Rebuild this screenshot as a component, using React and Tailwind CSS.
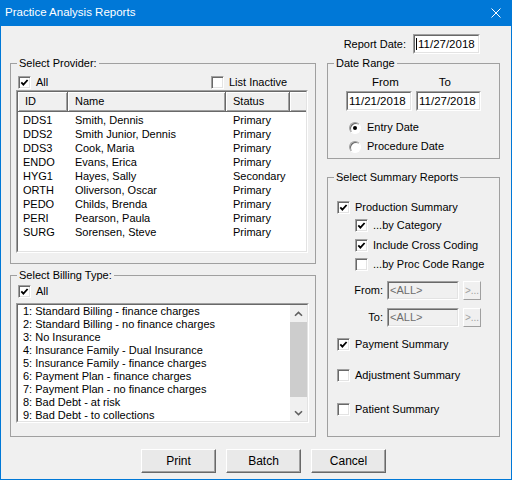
import React from 'react';

const providers = [
    { id: 'DDS1', name: 'Smith, Dennis', status: 'Primary' },
    { id: 'DDS2', name: 'Smith Junior, Dennis', status: 'Primary' },
    { id: 'DDS3', name: 'Cook, Maria', status: 'Primary' },
    { id: 'ENDO', name: 'Evans, Erica', status: 'Primary' },
    { id: 'HYG1', name: 'Hayes, Sally', status: 'Secondary' },
    { id: 'ORTH', name: 'Oliverson, Oscar', status: 'Primary' },
    { id: 'PEDO', name: 'Childs, Brenda', status: 'Primary' },
    { id: 'PERI', name: 'Pearson, Paula', status: 'Primary' },
    { id: 'SURG', name: 'Sorensen, Steve', status: 'Primary' },
];

const billingTypes = [
    '1: Standard Billing - finance charges',
    '2: Standard Billing - no finance charges',
    '3: No Insurance',
    '4: Insurance Family - Dual Insurance',
    '5: Insurance Family - finance charges',
    '6: Payment Plan - finance charges',
    '7: Payment Plan - no finance charges',
    '8: Bad Debt - at risk',
    '9: Bad Debt - to collections',
];

// classic sunken edge, used on text boxes and list boxes
function Sunken({ className = '', innerClassName = '', children }) {
    return (
        <div className={`border border-t-[#a0a0a0] border-l-[#a0a0a0] border-b-white border-r-white ${className}`}>
            <div className={`h-full border border-t-[#696969] border-l-[#696969] border-b-[#e3e3e3] border-r-[#e3e3e3] ${innerClassName}`}>
                {children}
            </div>
        </div>
    );
}

function CheckBox({ checked, label, className = '' }) {
    return (
        <div className={`flex h-[13px] items-center gap-[5px] leading-[13px] ${className}`}>
            <span className="flex h-[13px] w-[13px] shrink-0 items-center justify-center border border-t-[#a0a0a0] border-l-[#a0a0a0] border-b-white border-r-white bg-white shadow-[inset_1px_1px_0_#696969,inset_-1px_-1px_0_#e3e3e3]">
                {checked && (
                    <svg width="9" height="9" viewBox="0 0 9 9">
                        <path d="M1.3 4.3 L3.4 6.6 L7.6 2" stroke="#000" strokeWidth="1.8" fill="none" />
                    </svg>
                )}
            </span>
            <span>{label}</span>
        </div>
    );
}

function Radio({ checked, label, className = '' }) {
    return (
        <div className={`flex h-[13px] items-center gap-[6px] leading-[13px] ${className}`}>
            <span className="flex h-[12px] w-[12px] shrink-0 items-center justify-center rounded-full border border-t-[#a0a0a0] border-l-[#a0a0a0] border-b-white border-r-white bg-white shadow-[inset_1px_1px_0_#696969]">
                {checked && <span className="h-[4px] w-[4px] rounded-full bg-black" />}
            </span>
            <span>{label}</span>
        </div>
    );
}

function Group({ title, className = '', children }) {
    return (
        <fieldset className={`border border-[#a0a0a0] ${className}`}>
            <legend className="ml-[6px] px-[2px] leading-[13px]">{title}</legend>
            {children}
        </fieldset>
    );
}

function Button({ children }) {
    return (
        <div className="flex h-[24px] w-[75px] items-center justify-center border border-t-white border-l-white border-b-[#696969] border-r-[#696969] bg-[#e9e9e9] shadow-[inset_-1px_-1px_0_#a0a0a0] text-[12px]">
            {children}
        </div>
    );
}

function Chevron({ down }) {
    return (
        <svg width="9" height="6" viewBox="0 0 9 6">
            <path d={down ? 'M1 1.2 L4.5 4.6 L8 1.2' : 'M1 4.8 L4.5 1.4 L8 4.8'} stroke="#606060" strokeWidth="1.6" fill="none" />
        </svg>
    );
}

function DateBox({ value, caret, className = '' }) {
    return (
        <Sunken className={`h-[20px] bg-white ${className}`} innerClassName="flex items-center pl-[1px] text-[11.5px] leading-[14px]">
            {caret && <span className="mr-px h-[12px] w-px bg-black" />}
            <span>{value}</span>
        </Sunken>
    );
}

function CodeRange({ label, className = '' }) {
    return (
        <div className={`flex items-center ${className}`}>
            <span className="w-[55px] text-right">{label}</span>
            <Sunken className="ml-[4px] h-[19px] w-[72px] bg-[#f0f0f0]" innerClassName="flex items-center pl-px text-[#6d6d6d]">
                &lt;ALL&gt;
            </Sunken>
            <div className="ml-[4px] flex h-[19px] w-[18px] items-center justify-center border border-t-white border-l-white border-b-[#a0a0a0] border-r-[#a0a0a0] text-[10px] text-[#a0a0a0]">
                &gt;...
            </div>
        </div>
    );
}

export default function App() {
    return (
        <div className="flex h-[480px] w-[512px] flex-col overflow-hidden border-x border-b border-[#0078d7] bg-[#f0f0f0] font-['Liberation_Sans',Arial,sans-serif] text-[11px] text-black">
            {/* title bar */}
            <div className="flex h-[26px] shrink-0 items-center justify-between bg-[#0078d7] pl-[4px] pr-[10px] text-[11.5px] text-white">
                <span>Practice Analysis Reports</span>
                <svg width="10" height="10" viewBox="0 0 10 10">
                    <path d="M0.5 0.5 L9.5 9.5 M9.5 0.5 L0.5 9.5" stroke="#fff" strokeWidth="1" />
                </svg>
            </div>

            <div className="flex pl-[9px]">
                {/* left column */}
                <div className="w-[306px] pt-[31px]">
                    <Group title="Select Provider:" className="pb-[10px]">
                        <div className="mt-[6px] flex pl-[7px]">
                            <CheckBox checked label="All" className="w-[193px]" />
                            <CheckBox label="List Inactive" />
                        </div>
                        <Sunken className="ml-[5px] mt-[1px] h-[163px] w-[292px] bg-white" innerClassName="flex flex-col">
                            <div className="flex h-[20px] shrink-0 leading-[19px]">
                                <div className="w-[50px] border-b border-r border-[#696969] bg-[#f0f0f0] pl-[7px] shadow-[inset_1px_1px_0_#fff,inset_-1px_-1px_0_#a0a0a0]">ID</div>
                                <div className="w-[158px] border-b border-r border-[#696969] bg-[#f0f0f0] pl-[7px] shadow-[inset_1px_1px_0_#fff,inset_-1px_-1px_0_#a0a0a0]">Name</div>
                                <div className="w-[64px] border-b border-r border-[#696969] bg-[#f0f0f0] pl-[7px] shadow-[inset_1px_1px_0_#fff,inset_-1px_-1px_0_#a0a0a0]">Status</div>
                                <div className="flex-1 border-b border-[#696969] bg-[#f0f0f0] shadow-[inset_1px_1px_0_#fff,inset_0_-1px_0_#a0a0a0]" />
                            </div>
                            <div className="mt-px">
                                {providers.map((p) => (
                                    <div key={p.id} className="flex h-[14px] leading-[14px]">
                                        <span className="w-[50px] pl-[5px]">{p.id}</span>
                                        <span className="w-[158px] pl-[7px]">{p.name}</span>
                                        <span className="pl-[7px]">{p.status}</span>
                                    </div>
                                ))}
                            </div>
                        </Sunken>
                    </Group>

                    <Group title="Select Billing Type:" className="mt-[5px] pb-[13px]">
                        <CheckBox checked label="All" className="mt-[3px] pl-[7px]" />
                        <Sunken className="ml-[5px] mt-[5px] h-[120px] w-[293px] bg-white" innerClassName="flex">
                            <div className="flex-1 pl-[5px]">
                                {billingTypes.map((b) => (
                                    <div key={b} className="h-[13px] leading-[13px]">{b}</div>
                                ))}
                            </div>
                            <div className="flex w-[17px] flex-col bg-[#f0f0f0]">
                                <div className="flex h-[17px] items-center justify-center"><Chevron /></div>
                                <div className="h-[75px] bg-[#cdcdcd]" />
                                <div className="flex-1" />
                                <div className="flex h-[17px] items-center justify-center"><Chevron down /></div>
                            </div>
                        </Sunken>
                    </Group>
                </div>

                {/* right column */}
                <div className="ml-[11px] w-[173px] pt-[8px]">
                    <div className="flex items-center justify-end gap-[7px] pr-[20px]">
                        <span>Report Date:</span>
                        <DateBox value="11/27/2018" caret className="w-[67px]" />
                    </div>

                    <Group title="Date Range" className="mt-[3px] pb-[5px]">
                        <div className="mt-[6px] flex h-[13px] leading-[13px]">
                            <span className="ml-[44px] text-[11.5px]">From</span>
                            <span className="ml-[40px] text-[11.5px]">To</span>
                        </div>
                        <div className="mt-[2px] flex gap-[4px] pl-[18px]">
                            <DateBox value="11/21/2018" className="w-[66px]" />
                            <DateBox value="11/27/2018" className="w-[65px]" />
                        </div>
                        <Radio checked label="Entry Date" className="mt-[10px] pl-[21px]" />
                        <Radio label="Procedure Date" className="mt-[6px] pl-[21px]" />
                    </Group>

                    <Group title="Select Summary Reports" className="mt-[12px] pb-[20px]">
                        <CheckBox checked label="Production Summary" className="mt-[17px] pl-[9px]" />
                        <CheckBox checked label="...by Category" className="mt-[5px] pl-[27px]" />
                        <CheckBox checked label="Include Cross Coding" className="mt-[7px] pl-[27px]" />
                        <CheckBox label="...by Proc Code Range" className="mt-[6px] pl-[27px]" />
                        <CodeRange label="From:" className="mt-[10px]" />
                        <CodeRange label="To:" className="mt-[8px]" />
                        <CheckBox checked label="Payment Summary" className="mt-[11px] pl-[9px]" />
                        <CheckBox label="Adjustment Summary" className="mt-[18px] pl-[9px]" />
                        <CheckBox label="Patient Summary" className="mt-[21px] pl-[9px]" />
                    </Group>
                </div>
            </div>

            <div className="mt-[12px] flex gap-[10px] pl-[140px]">
                <Button>Print</Button>
                <Button>Batch</Button>
                <Button>Cancel</Button>
            </div>
        </div>
    );
}
